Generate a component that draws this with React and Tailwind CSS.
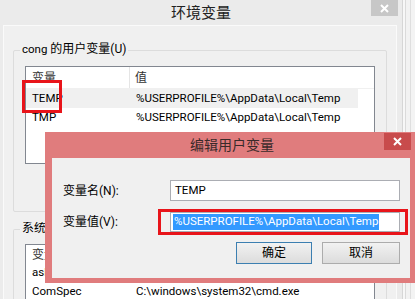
import React from "react";

const F = { fontFamily: 'Roboto, "Noto Sans CJK SC", sans-serif' };

function XIcon() {
  return (
    <svg width="9" height="9" viewBox="0 0 9 9">
      <path d="M1 1 L8 8 M8 1 L1 8" stroke="white" strokeWidth="2" />
    </svg>
  );
}

export default function App() {
  return (
    <div
      className="relative w-[415px] h-[299px] overflow-hidden bg-[#f3f3f3] text-[12px] text-black leading-none flex"
      style={F}
    >
      {/* main window */}
      <div className="w-[403px] h-full flex flex-col bg-[#ebebeb] border-r border-[#d6d6d6] shrink-0">
        <div className="h-[25px] relative flex items-center justify-center shrink-0">
          <span className="text-[15px] text-[#222] mt-[1px]">环境变量</span>
          <div className="absolute right-[4px] top-0 w-[27px] h-[16px] bg-[#c7c7c7] flex items-center justify-center">
            <XIcon />
          </div>
        </div>
        <div className="ml-[3px] mr-[5px] flex-1 bg-[#f0f0f0] border border-[#fafafa] border-b-0 pt-[24px] pl-[9px] pr-[9px]">
          {/* user group */}
          <div className="relative border border-[#dcdcdc] rounded-[2px] h-[162px] pt-[15px] px-[11px]">
            <span className="absolute left-[6px] top-[-8px] px-[2px] bg-[#f0f0f0] text-[12px]">
              <span className="text-[11.5px]">cong</span> 的用户变量(U)
            </span>
            <div className="h-[98px] bg-white border border-[#828790]">
              <div className="h-[22px] flex items-center border-b border-[#f0f0f0]">
                <div className="w-[104px] pl-[6px] border-r border-[#e5e5e5] h-full flex items-center text-[#333]">变量</div>
                <div className="pl-[5px] text-[#333]">值</div>
              </div>
              <div className="h-[19px] w-[332px] bg-[#f0f0f0] flex items-center text-[11.5px]">
                <div className="w-[104px] pl-[6px]">TEMP</div>
                <div className="pl-[6px]">%USERPROFILE%\AppData\Local\Temp</div>
              </div>
              <div className="h-[19px] flex items-center text-[11.5px]">
                <div className="w-[104px] pl-[6px]">TMP</div>
                <div className="pl-[6px]">%USERPROFILE%\AppData\Local\Temp</div>
              </div>
            </div>
          </div>
          {/* system group */}
          <div className="relative border border-[#dcdcdc] border-b-0 rounded-t-[2px] h-[90px] mt-[17px] pt-[14px] px-[11px]">
            <span className="absolute left-[6px] top-[-8px] px-[2px] bg-[#f0f0f0] text-[12px] w-[26px] overflow-hidden whitespace-nowrap">系统变量(S)</span>
            <div className="h-[80px] bg-white border border-[#828790] border-b-0">
              <div className="h-[19px] flex items-center">
                <div className="w-[104px] pl-[6px] border-r border-[#e5e5e5] h-full flex items-center text-[#333]">变量</div>
                <div className="pl-[5px] text-[#333]">值</div>
              </div>
              <div className="h-[18px] flex items-center text-[11.5px]">
                <div className="w-[104px] pl-[6px]">
                  <span className="block w-[14px] overflow-hidden whitespace-nowrap">asl.log</span>
                </div>
                <div className="pl-[6px]"></div>
              </div>
              <div className="h-[19px] flex items-center text-[11.5px]">
                <div className="w-[104px] pl-[6px]">ComSpec</div>
                <div className="pl-[6px]">C:\windows\system32\cmd.exe</div>
              </div>
            </div>
          </div>
        </div>
      </div>
      {/* background window edges */}
      <div className="flex-1 flex">
        <div className="w-[2px] bg-[#f7f7f7]" />
        <div className="w-[1px] bg-[#dadada]" />
        <div className="w-[4px] bg-[#f2f2f2]" />
        <div className="w-[1px] bg-[#dedede]" />
      </div>

      {/* red highlight around TEMP */}
      <div className="absolute left-[22px] top-[80px] w-[40px] h-[33px] border-[3px] border-[#e8141a]" />

      {/* edit dialog */}
      <div className="absolute left-[45px] top-[132px] w-[370px] h-[151px] bg-[#e07c7d] flex flex-col pl-[7px] pr-[5px] pb-[5px]">
        <div className="h-[26px] relative flex items-center justify-center shrink-0">
          <span className="text-[14px] text-[#3a2a2a] ml-[2px]">编辑用户变量</span>
          <div className="absolute right-[-1px] top-[1px] w-[27px] h-[17px] bg-[#c84b4c] flex items-center justify-center">
            <XIcon />
          </div>
        </div>
        <div className="flex-1 bg-[#f0f0f0] flex flex-col pl-[11px] pr-[10px] pt-[22px]">
          <div className="flex items-center h-[21px]">
            <span className="w-[107px]">变量名(N):</span>
            <div className="flex-1 h-[21px] bg-white border border-[#abadb3] flex items-center pl-[4px] text-[11.5px]">TEMP</div>
          </div>
          <div className="relative flex items-center h-[20px] mt-[11px]">
            <span className="w-[107px]">变量值(V):</span>
            <div className="flex-1 h-[20px] bg-white border border-[#abadb3] flex items-center pl-[2px]">
              <span className="inline-block w-fit bg-[#3399ff] text-white text-[11.5px] px-[1px] py-[2px]">%USERPROFILE%\AppData\Local\Temp</span>
            </div>
            <div className="absolute left-[95px] right-[-8px] top-[-3px] bottom-[-3px] border-[3px] border-[#e8141a]" />
          </div>
          <div className="flex justify-end gap-[10px] mt-[10px]">
            <div className="w-[76px] h-[22px] border border-[#3c7fb1] bg-gradient-to-b from-[#f2f2f2] to-[#dcdcdc] flex items-center justify-center">确定</div>
            <div className="w-[78px] h-[22px] border border-[#acacac] bg-gradient-to-b from-[#f2f2f2] to-[#dcdcdc] flex items-center justify-center">取消</div>
          </div>
        </div>
      </div>
    </div>
  );
}
